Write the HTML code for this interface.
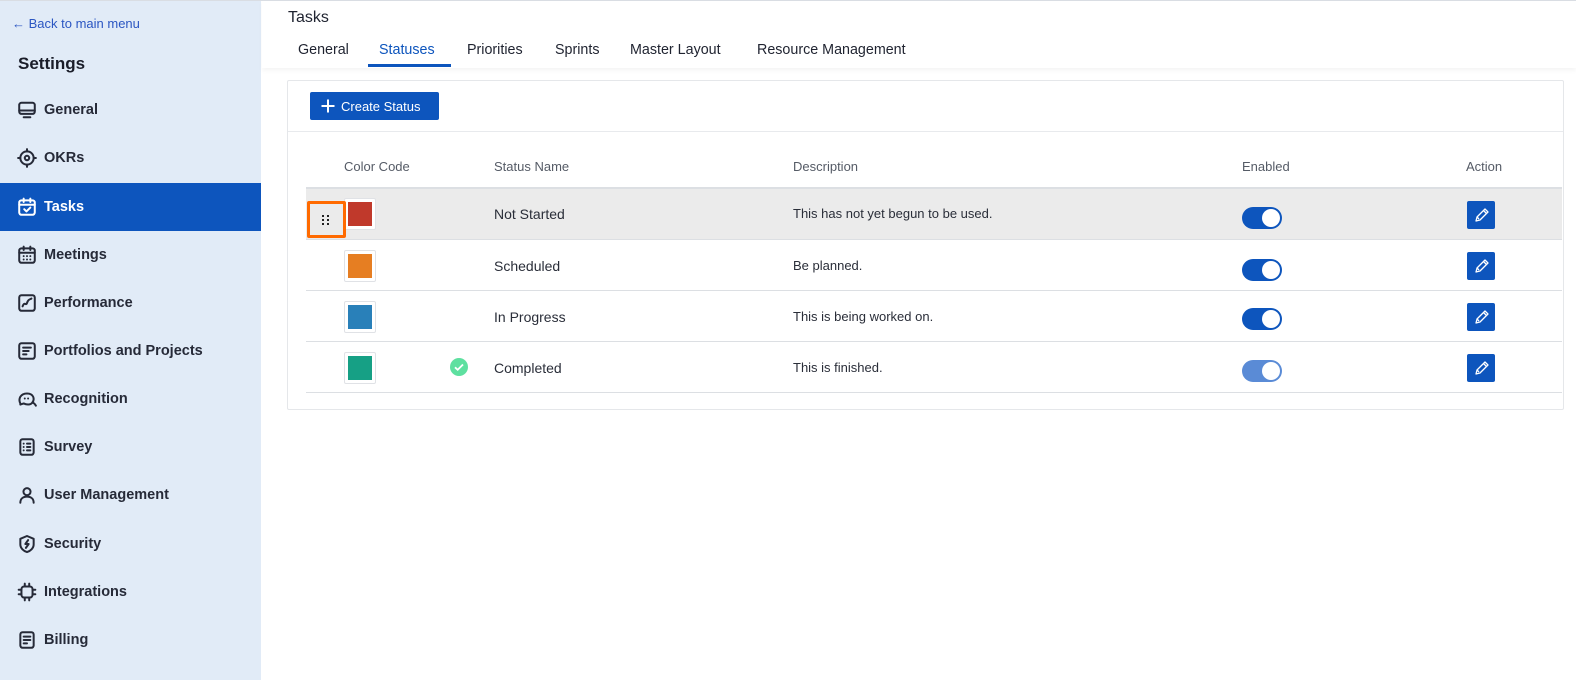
<!DOCTYPE html>
<html><head><meta charset="utf-8"><style>
*{box-sizing:border-box;margin:0;padding:0}
body{width:1576px;height:680px;overflow:hidden;font-family:"Liberation Sans",sans-serif;background:#fff;position:relative;color:#1f2330}
.top{position:absolute;left:0;top:0;width:1576px;height:1px;background:#d9dde3}
.side{position:absolute;left:0;top:1px;width:261px;height:679px;background:#e1ebf7}
.back{position:absolute;left:12px;top:15px;font-size:13px;color:#2b56c2}
.st{position:absolute;left:18px;top:53px;font-size:17px;font-weight:bold;color:#1a1d29}
.item{position:absolute;left:0;width:261px;height:48px;display:flex;align-items:center;font-size:14.5px;font-weight:bold;color:#262a38}
.item svg{margin-left:17px;margin-right:7px;width:20px;height:20px;fill:none;stroke:#262a38;stroke-width:1.8;stroke-linecap:round;stroke-linejoin:round}
.item.act{background:#0d55bd;color:#fff}
.item.act svg{stroke:#fff}
.h{position:absolute;left:288px;top:9px;font-size:16px;color:#1f2330}
.tabs{position:absolute;left:262px;top:0;width:1314px;height:68px;box-shadow:0 3px 4px rgba(0,0,0,0.04)}
.tab{position:absolute;top:42px;font-size:14.3px;color:#1f2330}
.ul{position:absolute;left:368px;top:64px;width:83px;height:3px;background:#0d55bd}
.card{position:absolute;left:287px;top:80px;width:1277px;height:330px;border:1px solid #e5e7ea;border-radius:2px}
.btn{position:absolute;left:310px;top:92px;width:129px;height:28px;background:#0d55bd;border-radius:2px;color:#fff;font-size:13px;display:flex;align-items:center}
.div{position:absolute;left:288px;top:131px;width:1275px;height:1px;background:#e8eaed}
.th{position:absolute;top:159px;font-size:13px;color:#555b66}
.row{position:absolute;left:306px;width:1256px;height:51px;border-bottom:1px solid #dcdfe3}
.sw{position:absolute;left:344px;width:32px;height:32px;border:1px solid #e0e2e6;background:#fff;border-radius:2px}
.sw i{position:absolute;left:3px;top:3px;width:24px;height:24px}
.nm{position:absolute;left:494px;font-size:14px;color:#2a2e39}
.ds{position:absolute;left:793px;font-size:13px;color:#2a2e39}
.tg{position:absolute;left:1242px;width:40px;height:22px;border-radius:11px;background:#0d55bd}
.tg i{position:absolute;right:2px;top:2px;width:18px;height:18px;border-radius:50%;background:#fff}
.ed{position:absolute;left:1467px;width:28px;height:28px;background:#0d55bd;border-radius:2px}
</style></head><body>
<div class="top"></div>
<div class="side">
<div class="back">← Back to main menu</div>
<div class="st">Settings</div>
</div>
<div class="item" style="top:86px"><svg viewBox="0 0 18 18"><rect x="2" y="2.5" width="14" height="10" rx="2"/><path d="M2 9.5h14M6 15.5h6"/></svg>General</div>
<div class="item" style="top:134px"><svg viewBox="0 0 18 18"><circle cx="9" cy="9" r="6"/><circle cx="9" cy="9" r="2"/><path d="M9 1v2M9 15v2M1 9h2M15 9h2"/></svg>OKRs</div>
<div class="item act" style="top:183px"><svg viewBox="0 0 18 18"><rect x="2" y="3" width="14" height="13" rx="2"/><path d="M2 7h14M6 1.5v3M12 1.5v3M6.5 11l2 2 3.5-3.5"/></svg>Tasks</div>
<div class="item" style="top:231px"><svg viewBox="0 0 18 18"><rect x="2" y="3" width="14" height="13" rx="2"/><path d="M2 7h14M6 1.5v3M12 1.5v3M6 10h0M9 10h0M12 10h0M6 13h0M9 13h0M12 13h0"/></svg>Meetings</div>
<div class="item" style="top:279px"><svg viewBox="0 0 18 18"><rect x="2" y="2" width="14" height="14" rx="2"/><path d="M5 12c2-5 3 0 4-3s2-3 4-4"/></svg>Performance</div>
<div class="item" style="top:327px"><svg viewBox="0 0 18 18"><rect x="2" y="2" width="14" height="14" rx="2"/><path d="M5.5 6h7M5.5 9h5M5.5 12h3"/></svg>Portfolios and Projects</div>
<div class="item" style="top:375px"><svg viewBox="0 0 18 18"><path d="M3 13c-2-4 0-9 6-9s7 5 5 8-6 2-8 1l-3 1z"/><path d="M7 8.5h0M10 8.5h0M14 12c2 1 3 3 3 3"/></svg>Recognition</div>
<div class="item" style="top:423px"><svg viewBox="0 0 18 18"><rect x="3" y="2" width="12" height="14" rx="2"/><path d="M6 6h0M9 6h3M6 9h0M9 9h3M6 12h0M9 12h3"/></svg>Survey</div>
<div class="item" style="top:471px"><svg viewBox="0 0 18 18"><circle cx="9" cy="6" r="3.2"/><path d="M3 16c0-4 3-5.5 6-5.5s6 1.5 6 5.5"/></svg>User Management</div>
<div class="item" style="top:520px"><svg viewBox="0 0 18 18"><path d="M9 1.8l6 2.5v5c0 3.5-3 6-6 7-3-1-6-3.5-6-7v-5z"/><path d="M10 5.5l-2.5 3.5h3L8 12.5"/></svg>Security</div>
<div class="item" style="top:568px"><svg viewBox="0 0 18 18"><rect x="4" y="4" width="10" height="10" rx="2.5"/><path d="M7 1.5v2.5M11 1.5v2.5M7 14v2.5M11 14v2.5M1.5 7h2.5M1.5 11h2.5M14 7h2.5M14 11h2.5"/></svg>Integrations</div>
<div class="item" style="top:616px"><svg viewBox="0 0 18 18"><rect x="3" y="2" width="12" height="14" rx="2"/><path d="M6 6h6M6 9h6M6 12h3"/></svg>Billing</div>

<div class="tabs"></div>
<div class="h">Tasks</div>
<div class="tab" style="left:298px">General</div>
<div class="tab" style="left:379px;color:#0d55bd">Statuses</div>
<div class="tab" style="left:467px">Priorities</div>
<div class="tab" style="left:555px">Sprints</div>
<div class="tab" style="left:630px">Master Layout</div>
<div class="tab" style="left:757px">Resource Management</div>
<div class="ul"></div>

<div class="card"></div>
<div class="btn"><svg width="16" height="16" viewBox="0 0 16 16" style="margin:0 5px 0 10px"><path d="M8 1.5v13M1.5 8h13" stroke="#fff" stroke-width="2"/></svg>Create Status</div>
<div class="div"></div>
<div class="th" style="left:344px">Color Code</div>
<div class="th" style="left:494px">Status Name</div>
<div class="th" style="left:793px">Description</div>
<div class="th" style="left:1242px">Enabled</div>
<div class="th" style="left:1466px">Action</div>
<div style="position:absolute;left:306px;top:187px;width:1256px;height:2px;background:#dcdfe3"></div>

<div class="row" style="top:189px;background:#ebebeb"></div>
<div class="row" style="top:240px"></div>
<div class="row" style="top:291px"></div>
<div class="row" style="top:342px"></div>

<div class="sw" style="top:198px"><i style="background:#c0392b"></i></div>
<div class="sw" style="top:250px"><i style="background:#e67e22"></i></div>
<div class="sw" style="top:301px"><i style="background:#2980b9"></i></div>
<div class="sw" style="top:352px"><i style="background:#16a085"></i></div>
<div style="position:absolute;left:307px;top:201px;width:39px;height:37px;border:3px solid #ff6a00;border-radius:2px;background:#ebebeb"><svg width="10" height="12" viewBox="0 0 10 12" style="position:absolute;left:11px;top:10px"><g fill="#222"><rect x="1" y="1" width="2" height="2"/><rect x="6" y="1" width="2" height="2"/><rect x="1" y="5" width="2" height="2"/><rect x="6" y="5" width="2" height="2"/><rect x="1" y="9" width="2" height="2"/><rect x="6" y="9" width="2" height="2"/></g></svg></div>
<svg width="18" height="18" viewBox="0 0 18 18" style="position:absolute;left:450px;top:358px"><circle cx="9" cy="9" r="9" fill="#5ee0a0"/><path d="M5 9.3l2.7 2.5L13 6.5" stroke="#fff" stroke-width="1.8" fill="none"/></svg>

<div class="nm" style="top:206px">Not Started</div>
<div class="nm" style="top:258px">Scheduled</div>
<div class="nm" style="top:309px">In Progress</div>
<div class="nm" style="top:360px">Completed</div>
<div class="ds" style="top:206px">This has not yet begun to be used.</div>
<div class="ds" style="top:258px">Be planned.</div>
<div class="ds" style="top:309px">This is being worked on.</div>
<div class="ds" style="top:360px">This is finished.</div>

<div class="tg" style="top:207px"><i></i></div>
<div class="tg" style="top:259px"><i></i></div>
<div class="tg" style="top:308px"><i></i></div>
<div class="tg" style="top:360px;background:#5a8bd6"><i></i></div>

<div class="ed" style="top:201px"><svg width="28" height="28" viewBox="0 0 28 28"><path d="M9 20l1-4 8-8 3 3-8 8zM16.5 9.5l3 3M10 16l2 2" stroke="#fff" stroke-width="1.3" fill="none" stroke-linejoin="round"/></svg></div>
<div class="ed" style="top:252px"><svg width="28" height="28" viewBox="0 0 28 28"><path d="M9 20l1-4 8-8 3 3-8 8zM16.5 9.5l3 3M10 16l2 2" stroke="#fff" stroke-width="1.3" fill="none" stroke-linejoin="round"/></svg></div>
<div class="ed" style="top:303px"><svg width="28" height="28" viewBox="0 0 28 28"><path d="M9 20l1-4 8-8 3 3-8 8zM16.5 9.5l3 3M10 16l2 2" stroke="#fff" stroke-width="1.3" fill="none" stroke-linejoin="round"/></svg></div>
<div class="ed" style="top:354px"><svg width="28" height="28" viewBox="0 0 28 28"><path d="M9 20l1-4 8-8 3 3-8 8zM16.5 9.5l3 3M10 16l2 2" stroke="#fff" stroke-width="1.3" fill="none" stroke-linejoin="round"/></svg></div>
</body></html>
